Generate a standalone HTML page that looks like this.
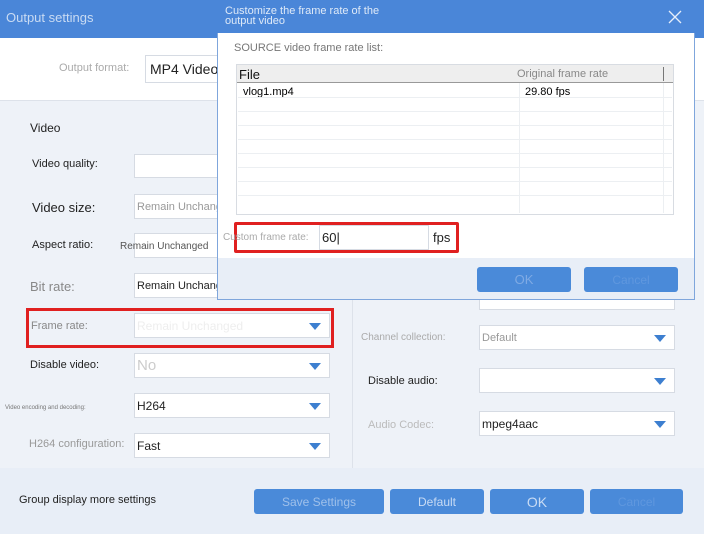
<!DOCTYPE html>
<html><head><style>
body{margin:0;width:704px;height:534px;overflow:hidden;font-family:"Liberation Sans",sans-serif;background:#eef2f8;position:relative}
.a{position:absolute}
.box{position:absolute;background:#fff;border:1px solid #d6dbe3;box-sizing:border-box;font-size:12px;color:#222;padding-left:2px;display:flex;align-items:center;white-space:nowrap;overflow:visible}
.tri{position:absolute;right:8px;top:50%;margin-top:-3px;width:0;height:0;border-left:6px solid transparent;border-right:6px solid transparent;border-top:7px solid #3d7fd0}
.lbl{position:absolute;font-size:11px;color:#222;white-space:nowrap}
.btn{position:absolute;background:#4a8ad9;color:#9fc0ea;font-size:12px;display:flex;align-items:center;justify-content:center;border-radius:3px}
.row{position:absolute;left:1px;right:1px;height:1px;background:#eceff2}
</style></head><body>
<div class="a" style="left:0;top:0;width:704px;height:38px;background:#4a86d8"></div>
<div class="a" style="left:6px;top:10px;color:#c9dbf3;font-size:13px">Output settings</div>
<div class="a" style="left:0;top:38px;width:704px;height:62px;background:#fff;border-bottom:1px solid #dde2ea"></div>
<div class="lbl" style="left:59px;top:62px;color:#aaa">Output format:</div>
<div class="box" style="left:145px;top:55px;width:90px;height:28px;font-size:14px;padding-left:4px">MP4 Video</div>
<div class="lbl" style="left:30px;top:121px;font-size:12px">Video</div>
<div class="lbl" style="left:32px;top:158px">Video quality:</div>
<div class="box" style="left:134px;top:154px;width:90px;height:24px"></div>
<div class="lbl" style="left:32px;top:200px;font-size:13px">Video size:</div>
<div class="box" style="left:134px;top:194px;width:90px;height:25px;color:#999;font-size:11px">Remain Unchanged</div>
<div class="lbl" style="left:32px;top:239px">Aspect ratio:</div>
<div class="box" style="left:134px;top:233px;width:90px;height:25px"></div>
<div class="lbl" style="left:120px;top:241px;font-size:10px;color:#555">Remain Unchanged</div>
<div class="lbl" style="left:30px;top:279px;font-size:13px;color:#888">Bit rate:</div>
<div class="box" style="left:134px;top:273px;width:90px;height:25px;font-size:11px">Remain Unchanged</div>
<div class="a" style="left:26px;top:308px;width:308px;height:40px;border:3px solid #e02020;box-sizing:border-box"></div>
<div class="lbl" style="left:31px;top:320px;color:#888">Frame rate:</div>
<div class="box" style="left:134px;top:313px;width:196px;height:25px;color:#eee">Remain Unchanged<div class="tri"></div></div>
<div class="lbl" style="left:30px;top:359px">Disable video:</div>
<div class="box" style="left:134px;top:353px;width:196px;height:25px;color:#ccc;font-size:15px">No<div class="tri"></div></div>
<div class="lbl" style="left:5px;top:405px;font-size:6px;color:#777">Video encoding and decoding:</div>
<div class="box" style="left:134px;top:393px;width:196px;height:25px">H264<div class="tri"></div></div>
<div class="lbl" style="left:29px;top:438px;color:#999">H264 configuration:</div>
<div class="box" style="left:134px;top:433px;width:196px;height:25px">Fast<div class="tri"></div></div>
<div class="a" style="left:352px;top:300px;width:1px;height:168px;background:#dde2ea"></div>
<div class="box" style="left:479px;top:285px;width:196px;height:25px"></div>
<div class="lbl" style="left:361px;top:332px;color:#aaa;font-size:10px">Channel collection:</div>
<div class="box" style="left:479px;top:325px;width:196px;height:25px;color:#999;font-size:11px">Default<div class="tri"></div></div>
<div class="lbl" style="left:368px;top:375px">Disable audio:</div>
<div class="box" style="left:479px;top:368px;width:196px;height:25px"><div class="tri"></div></div>
<div class="lbl" style="left:368px;top:419px;color:#bbb">Audio Codec:</div>
<div class="box" style="left:479px;top:411px;width:196px;height:25px">mpeg4aac<div class="tri"></div></div>
<div class="a" style="left:0;top:468px;width:704px;height:66px;background:#e8eef7"></div>
<div class="lbl" style="left:19px;top:494px">Group display more settings</div>
<div class="btn" style="left:254px;top:489px;width:130px;height:25px">Save Settings</div>
<div class="btn" style="left:390px;top:489px;width:94px;height:25px;color:#c8dbf4">Default</div>
<div class="btn" style="left:490px;top:489px;width:94px;height:25px;font-size:14px;color:#c8dbf4">OK</div>
<div class="btn" style="left:590px;top:489px;width:93px;height:25px;color:#5f97de">Cancel</div>
<!-- dialog -->
<div class="a" style="left:217px;top:0;width:478px;height:300px;background:#fff;border:1px solid #7fa6dc;box-sizing:border-box"></div>
<div class="a" style="left:217px;top:0;width:478px;height:33px;background:#4a86d8"></div>
<div class="a" style="left:225px;top:6px;color:#dfeaf8;font-size:11px;line-height:10px">Customize the frame rate of the<br>output video</div>
<svg class="a" style="left:668px;top:10px" width="14" height="14"><path d="M1 1L13 13M13 1L1 13" stroke="#e6eefa" stroke-width="1.3"/></svg>
<div class="lbl" style="left:234px;top:42px;color:#777">SOURCE video frame rate list:</div>
<div class="a" style="left:236px;top:64px;width:438px;height:151px;border:1px solid #d8dce2;box-sizing:border-box;background:#fff">
<div class="a" style="left:0;top:0;width:436px;height:17px;background:#eee;border-bottom:1px solid #999"></div>
<div class="a" style="left:2px;top:2px;font-size:13px;color:#111">File</div>
<div class="a" style="left:280px;top:3px;font-size:11px;color:#888">Original frame rate</div>
<div class="a" style="left:426px;top:2px;width:1px;height:14px;background:#777"></div>
<div class="a" style="left:6px;top:21px;font-size:11px">vlog1.mp4</div>
<div class="a" style="left:288px;top:21px;font-size:11px">29.80 fps</div>
<div class="a" style="left:282px;top:18px;width:1px;height:130px;background:#eceff2"></div>
<div class="a" style="left:426px;top:18px;width:1px;height:130px;background:#eceff2"></div>
<div class="row" style="top:32px"></div><div class="row" style="top:46px"></div><div class="row" style="top:60px"></div><div class="row" style="top:74px"></div><div class="row" style="top:88px"></div><div class="row" style="top:102px"></div><div class="row" style="top:116px"></div><div class="row" style="top:130px"></div>
</div>
<div class="a" style="left:234px;top:222px;width:225px;height:31px;border:3px solid #e02020;box-sizing:border-box;border-radius:2px"></div>
<div class="lbl" style="left:223px;top:232px;color:#aaa;font-size:10px">Custom frame rate:</div>
<div class="box" style="left:319px;top:225px;width:110px;height:25px;font-size:13px">60|</div>
<div class="lbl" style="left:433px;top:230px;font-size:13px">fps</div>
<div class="a" style="left:218px;top:258px;width:476px;height:41px;background:#e8eef7"></div>
<div class="btn" style="left:477px;top:267px;width:94px;height:25px;font-size:13px;color:#7faae4">OK</div>
<div class="btn" style="left:584px;top:267px;width:94px;height:25px;color:#5f97de">Cancel</div>
</body></html>
